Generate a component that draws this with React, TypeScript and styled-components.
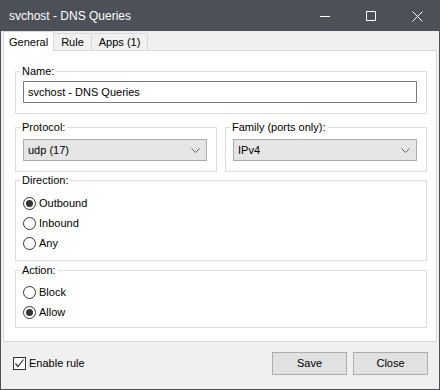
import styled, { createGlobalStyle } from "styled-components";

const Global = createGlobalStyle`
  body {
    margin: 0;
    background: #ffffff;
    font-family: "Liberation Sans", Arial, sans-serif;
    font-size: 11px;
    color: #000000;
  }
`;

function App() {
  return (
    <>
      <Global />
      <Window>
        <TitleBar>
          <Title>svchost - DNS Queries</Title>
          <Controls>
            <Control>
              <svg width="10" height="10" viewBox="0 0 10 10">
                <line x1="0" y1="5.5" x2="10" y2="5.5" stroke="#fff" strokeWidth="1" />
              </svg>
            </Control>
            <Control>
              <svg width="10" height="10" viewBox="0 0 10 10">
                <rect x="0.5" y="0.5" width="9" height="9" fill="none" stroke="#fff" strokeWidth="1" />
              </svg>
            </Control>
            <Control>
              <svg width="11" height="11" viewBox="0 0 11 11">
                <path d="M0.5 0.5 L10.5 10.5 M10.5 0.5 L0.5 10.5" stroke="#fff" strokeWidth="1" />
              </svg>
            </Control>
          </Controls>
        </TitleBar>
        <Body>
          <TabStrip>
            <Tab $active>General</Tab>
            <Tab>Rule</Tab>
            <Tab>Apps (1)</Tab>
          </TabStrip>
          <Panel>
            <Group $top={0} $bottom={10}>
              <Legend>Name:</Legend>
              <TextInput>svchost - DNS Queries</TextInput>
            </Group>
            <Row>
              <Group $top={0} $bottom={10} $fill>
                <Legend>Protocol:</Legend>
                <Select>
                  <span>udp (17)</span>
                  <Chevron />
                </Select>
              </Group>
              <Group $top={0} $bottom={10} $fill>
                <Legend>Family (ports only):</Legend>
                <Select>
                  <span>IPv4</span>
                  <Chevron />
                </Select>
              </Group>
            </Row>
            <Group $top={1} $bottom={7}>
              <Legend>Direction:</Legend>
              <RadioList $gap={6}>
                <RadioRow><Radio $checked />Outbound</RadioRow>
                <RadioRow><Radio />Inbound</RadioRow>
                <RadioRow><Radio />Any</RadioRow>
              </RadioList>
            </Group>
            <Group $top={2} $bottom={5}>
              <Legend>Action:</Legend>
              <RadioList $gap={5}>
                <RadioRow><Radio />Block</RadioRow>
                <RadioRow><Radio $checked />Allow</RadioRow>
              </RadioList>
            </Group>
          </Panel>
          <Footer>
            <CheckLabel>
              <CheckBox>
                <svg width="11" height="11" viewBox="0 0 11 11">
                  <polyline points="1.5,5.5 4,8.5 9.5,1.5" fill="none" stroke="#333" strokeWidth="1.2" />
                </svg>
              </CheckBox>
              Enable rule
            </CheckLabel>
            <Buttons>
              <Button>Save</Button>
              <Button>Close</Button>
            </Buttons>
          </Footer>
        </Body>
      </Window>
    </>
  );
}

function Chevron() {
  return (
    <svg width="9" height="5" viewBox="0 0 9 5">
      <polyline points="0.5,0.5 4.5,4.5 8.5,0.5" fill="none" stroke="#606060" strokeWidth="1" />
    </svg>
  );
}

const Window = styled.div`
  box-sizing: border-box;
  width: 440px;
  height: 390px;
  border: 1px solid #4b5157;
  background: #f0f0f0;
  display: flex;
  flex-direction: column;
`;

const TitleBar = styled.div`
  height: 30px;
  background: #4b5157;
  display: flex;
  align-items: center;
  justify-content: space-between;
  margin: -1px -1px 0;
  padding-top: 1px;
`;

const Title = styled.div`
  color: #ffffff;
  font-size: 12px;
  padding-left: 9px;
`;

const Controls = styled.div`
  display: flex;
  height: 100%;
`;

const Control = styled.div`
  width: 46px;
  display: flex;
  align-items: center;
  justify-content: center;
`;

const Body = styled.div`
  flex: 1;
  display: flex;
  flex-direction: column;
  padding: 0 2px;
`;

const TabStrip = styled.div`
  height: 19px;
  display: flex;
  align-items: flex-end;
`;

const Tab = styled.div<{ $active?: boolean }>`
  box-sizing: border-box;
  height: ${(p) => (p.$active ? "20px" : "17px")};
  margin-bottom: ${(p) => (p.$active ? "-1px" : "0")};
  position: relative;
  z-index: ${(p) => (p.$active ? 1 : 0)};
  padding: 0 ${(p) => (p.$active ? "5px" : "7px")};
  display: flex;
  align-items: center;
  background: ${(p) => (p.$active ? "#ffffff" : "#f0f0f0")};
  border: 1px solid #d9d9d9;
  border-bottom: none;
  margin-left: ${(p) => (p.$active ? "0" : "-1px")};
`;

const Panel = styled.div`
  box-sizing: border-box;
  height: 292px;
  background: #ffffff;
  border: 1px solid #d9d9d9;
  padding: 13px 9px 0 11px;
  display: flex;
  flex-direction: column;
`;

const Group = styled.fieldset<{ $top: number; $bottom: number; $fill?: boolean }>`
  margin: ${(p) => p.$top}px 0 0;
  padding: 0 9px ${(p) => p.$bottom}px 7px;
  border: 1px solid #dcdcdc;
  min-width: 0;
  flex: ${(p) => (p.$fill ? "1 1 0" : "none")};
`;

const Legend = styled.legend`
  padding: 0 2px;
  margin-left: -3px;
  line-height: 14px;
`;

const Row = styled.div`
  display: flex;
  gap: 8px;
  margin-top: 6px;
`;

const TextInput = styled.div`
  box-sizing: border-box;
  margin-top: 3px;
  height: 22px;
  border: 1px solid #7a7a7a;
  padding-left: 4px;
  display: flex;
  align-items: center;
`;

const Select = styled.div`
  box-sizing: border-box;
  margin-top: 5px;
  height: 22px;
  border: 1px solid #adadad;
  background: #e5e5e5;
  padding: 0 6px 0 4px;
  display: flex;
  align-items: center;
  justify-content: space-between;
`;

const RadioList = styled.div<{ $gap: number }>`
  margin-top: ${(p) => p.$gap}px;
  display: flex;
  flex-direction: column;
`;

const RadioRow = styled.div`
  height: 20px;
  display: flex;
  align-items: center;
  gap: 3px;
`;

const Radio = styled.span<{ $checked?: boolean }>`
  box-sizing: border-box;
  width: 13px;
  height: 13px;
  border: 1px solid #333333;
  border-radius: 50%;
  background: #ffffff;
  display: flex;
  align-items: center;
  justify-content: center;
  &::after {
    content: "";
    width: 7px;
    height: 7px;
    border-radius: 50%;
    background: ${(p) => (p.$checked ? "#333333" : "transparent")};
  }
`;

const Footer = styled.div`
  flex: 1;
  display: flex;
  align-items: center;
  justify-content: space-between;
  padding: 0 9px 5px 10px;
`;

const CheckLabel = styled.div`
  display: flex;
  align-items: center;
  gap: 3px;
`;

const CheckBox = styled.span`
  box-sizing: border-box;
  width: 13px;
  height: 13px;
  border: 1px solid #333333;
  background: #ffffff;
  display: flex;
  align-items: center;
  justify-content: center;
`;

const Buttons = styled.div`
  display: flex;
  gap: 6px;
`;

const Button = styled.div`
  box-sizing: border-box;
  width: 75px;
  height: 23px;
  border: 1px solid #adadad;
  background: #e1e1e1;
  display: flex;
  align-items: center;
  justify-content: center;
`;

export default App;
